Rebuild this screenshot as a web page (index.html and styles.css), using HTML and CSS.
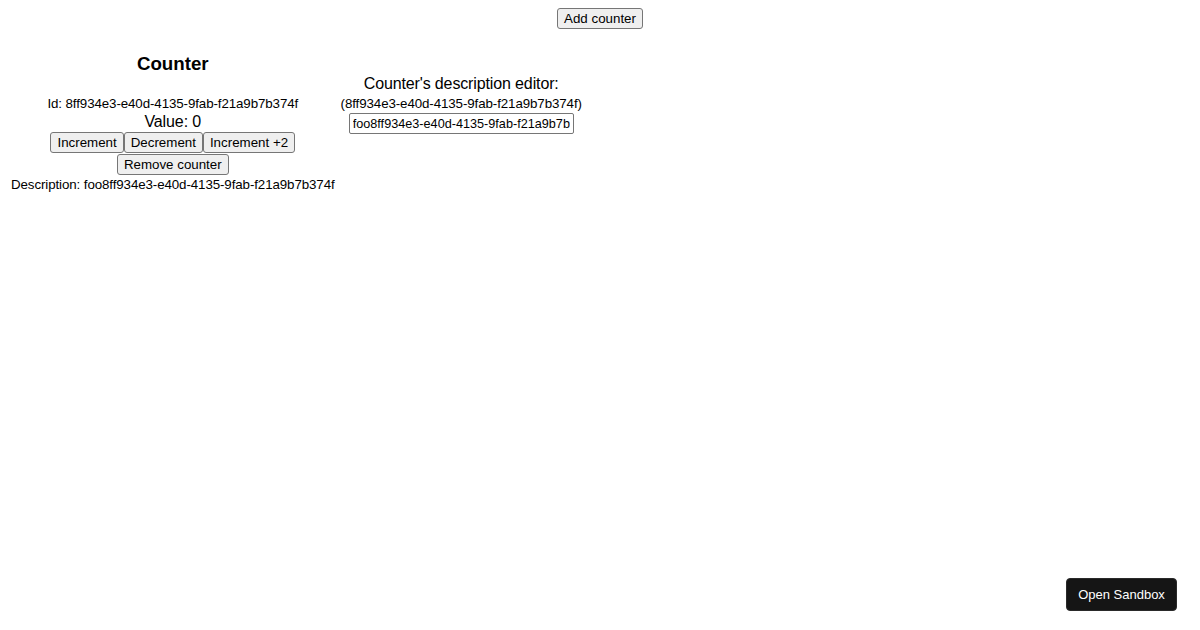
FILE: index.html
```html
<!DOCTYPE html>
<html>
<head>
<meta charset="utf-8">
<link rel="stylesheet" href="styles.css">
</head>
<body>
<div class="top"><button class="btn">Add counter</button></div>
<div class="row">
  <div class="counter">
    <h3 class="title">Counter</h3>
    <div class="small id">Id: 8ff934e3-e40d-4135-9fab-f21a9b7b374f</div>
    <div class="value">Value: 0</div>
    <div class="btns"><button class="btn">Increment</button><button class="btn">Decrement</button><button class="btn">Increment +2</button></div>
    <div class="btns"><button class="btn">Remove counter</button></div>
    <div class="small desc">Description: foo8ff934e3-e40d-4135-9fab-f21a9b7b374f</div>
  </div>
  <div class="editor">
    <div class="etitle">Counter's description editor:</div>
    <div class="small eid">(8ff934e3-e40d-4135-9fab-f21a9b7b374f)</div>
    <input class="field" type="text" value="foo8ff934e3-e40d-4135-9fab-f21a9b7b374f">
  </div>
</div>
<button class="sandbox">Open Sandbox</button>
</body>
</html>
```
FILE: styles.css
```css
body {
  margin: 8px;
  font-family: "Liberation Sans", Arial, sans-serif;
  font-size: 16px;
  color: #000;
  background: #fff;
}
.btn {
  font-family: "Liberation Sans", Arial, sans-serif;
  font-size: 13.333px;
  line-height: 15px;
  padding: 1px 6px;
  height: 21px;
  border: 1px solid #767676;
  border-radius: 3px;
  background: #efefef;
  color: #000;
  vertical-align: top;
  margin: 0;
}
.top {
  text-align: center;
  height: 21px;
}
.row {
  display: flex;
  align-items: flex-start;
}
.counter {
  text-align: center;
  padding: 0 3px;
}
.title {
  margin: 24px 0 20px;
  font-size: 18.72px;
  line-height: 22px;
}
.small {
  font-size: 13.333px;
  letter-spacing: -0.1px;
}
.id {
  line-height: 17px;
}
.value {
  line-height: 19px;
  letter-spacing: -0.1px;
}
.btns {
  height: 21px;
  margin-top: 1px;
}
.desc {
  line-height: 18px;
  margin-top: 1px;
}
.editor {
  text-align: center;
  padding: 46px 0 0 3px;
}
.etitle {
  line-height: 18px;
  letter-spacing: -0.13px;
}
.eid {
  line-height: 18px;
  padding-top: 2px;
}
.field {
  box-sizing: border-box;
  width: 225px;
  height: 21px;
  font-family: "Liberation Sans", Arial, sans-serif;
  font-size: 12.67px;
  padding: 1px 3px;
  border: 1px solid #767676;
  border-radius: 2px;
  margin: 0;
}
.sandbox {
  position: fixed;
  right: 23px;
  bottom: 19px;
  width: 111px;
  height: 33px;
  background: #151515;
  color: #fff;
  border: 1px solid #2a2a2a;
  border-radius: 4px;
  font-family: "Liberation Sans", Arial, sans-serif;
  font-size: 13px;
  padding: 0;
}
```
